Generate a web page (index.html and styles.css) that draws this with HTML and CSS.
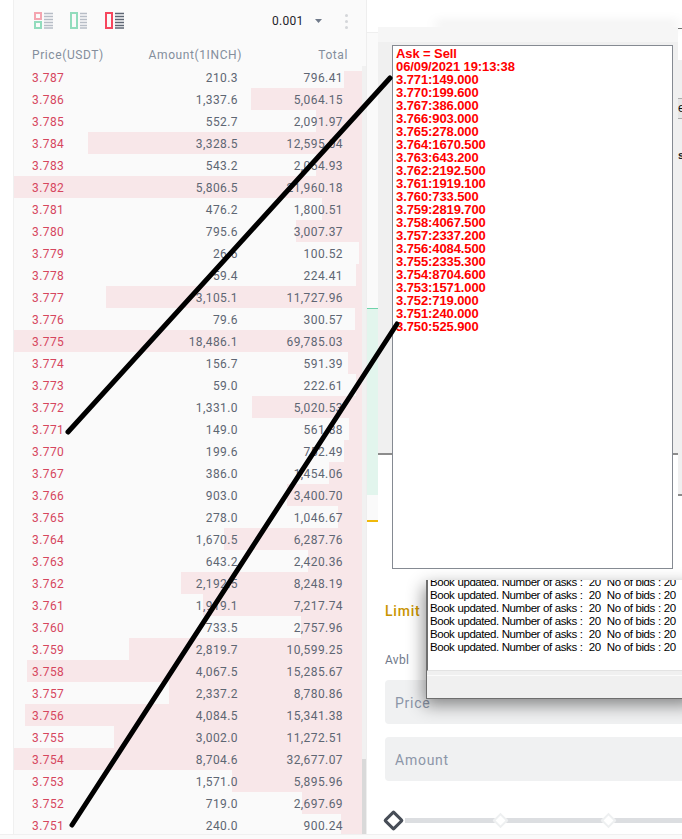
FILE: index.html
```html
<!DOCTYPE html>
<html lang="en">
<head>
<meta charset="utf-8">
<title>Order book</title>
<link rel="stylesheet" href="styles.css">
</head>
<body>
<div class="page">
  <section class="book">
    <div class="toolbar">
      <div class="modes">
        <svg class="mode" width="19" height="17" viewBox="0 0 19 17"><rect x="1" y="1" width="6" height="6" class="red-soft"/><rect x="1" y="10" width="6" height="6" class="green-soft"/><path class="lines-soft" d="M10 1.5h9M10 4.5h9M10 7.5h9M10 10.5h9M10 13.5h9M10 16h9"/></svg>
        <svg class="mode" width="19" height="17" viewBox="0 0 19 17"><rect x="1" y="1" width="6" height="15" class="green-soft"/><path class="lines-soft" d="M10 1.5h7M10 4.5h7M10 7.5h7M10 10.5h7M10 13.5h7M10 16h7"/></svg>
        <svg class="mode" width="19" height="17" viewBox="0 0 19 17"><rect x="1" y="1" width="6" height="15" class="red-strong"/><path class="lines-strong" d="M10 1.5h9M10 4.5h9M10 7.5h9M10 10.5h9M10 13.5h9M10 16h9"/></svg>
      </div>
      <span class="tick">0.001</span>
      <svg class="caret" width="7" height="4" viewBox="0 0 7 4"><path d="M0 0h7L3.5 4z"/></svg>
      <span class="dots"><i></i><i></i><i></i></span>
    </div>
    <div class="head"><span>Price(USDT)</span><span class="r">Amount(1INCH)</span><span class="r">Total</span></div>
    <div class="scroller">
      <div class="rows">
        <div class="row first"><i class="bar" style="width:17.5px"></i><span class="p">3.787</span><span class="r">210.3</span><span class="r">796.41</span></div>
        <div class="row"><i class="bar" style="width:110.5px"></i><span class="p">3.786</span><span class="r">1,337.6</span><span class="r">5,064.15</span></div>
        <div class="row"><i class="bar" style="width:45.5px"></i><span class="p">3.785</span><span class="r">552.7</span><span class="r">2,091.97</span></div>
        <div class="row"><i class="bar" style="width:274px"></i><span class="p">3.784</span><span class="r">3,328.5</span><span class="r">12,595.04</span></div>
        <div class="row"><i class="bar" style="width:45.5px"></i><span class="p">3.783</span><span class="r">543.2</span><span class="r">2,054.93</span></div>
        <div class="row"><i class="bar" style="width:347.5px"></i><span class="p">3.782</span><span class="r">5,806.5</span><span class="r">21,960.18</span></div>
        <div class="row"><i class="bar" style="width:39.5px"></i><span class="p">3.781</span><span class="r">476.2</span><span class="r">1,800.51</span></div>
        <div class="row"><i class="bar" style="width:65.5px"></i><span class="p">3.780</span><span class="r">795.6</span><span class="r">3,007.37</span></div>
        <div class="row"><i class="bar" style="width:2.5px"></i><span class="p">3.779</span><span class="r">26.6</span><span class="r">100.52</span></div>
        <div class="row"><i class="bar" style="width:5.5px"></i><span class="p">3.778</span><span class="r">59.4</span><span class="r">224.41</span></div>
        <div class="row"><i class="bar" style="width:255.5px"></i><span class="p">3.777</span><span class="r">3,105.1</span><span class="r">11,727.96</span></div>
        <div class="row"><i class="bar" style="width:7px"></i><span class="p">3.776</span><span class="r">79.6</span><span class="r">300.57</span></div>
        <div class="row"><i class="bar" style="width:347.5px"></i><span class="p">3.775</span><span class="r">18,486.1</span><span class="r">69,785.03</span></div>
        <div class="row"><i class="bar" style="width:13.5px"></i><span class="p">3.774</span><span class="r">156.7</span><span class="r">591.39</span></div>
        <div class="row"><i class="bar" style="width:5.5px"></i><span class="p">3.773</span><span class="r">59.0</span><span class="r">222.61</span></div>
        <div class="row"><i class="bar" style="width:109.5px"></i><span class="p">3.772</span><span class="r">1,331.0</span><span class="r">5,020.53</span></div>
        <div class="row"><i class="bar" style="width:12.5px"></i><span class="p">3.771</span><span class="r">149.0</span><span class="r">561.88</span></div>
        <div class="row"><i class="bar" style="width:17.5px"></i><span class="p">3.770</span><span class="r">199.6</span><span class="r">752.49</span></div>
        <div class="row"><i class="bar" style="width:32.5px"></i><span class="p">3.767</span><span class="r">386.0</span><span class="r">1,454.06</span></div>
        <div class="row"><i class="bar" style="width:74.5px"></i><span class="p">3.766</span><span class="r">903.0</span><span class="r">3,400.70</span></div>
        <div class="row"><i class="bar" style="width:23.5px"></i><span class="p">3.765</span><span class="r">278.0</span><span class="r">1,046.67</span></div>
        <div class="row"><i class="bar" style="width:137.5px"></i><span class="p">3.764</span><span class="r">1,670.5</span><span class="r">6,287.76</span></div>
        <div class="row"><i class="bar" style="width:53.5px"></i><span class="p">3.763</span><span class="r">643.2</span><span class="r">2,420.36</span></div>
        <div class="row"><i class="bar" style="width:180.5px"></i><span class="p">3.762</span><span class="r">2,192.5</span><span class="r">8,248.19</span></div>
        <div class="row"><i class="bar" style="width:158.5px"></i><span class="p">3.761</span><span class="r">1,919.1</span><span class="r">7,217.74</span></div>
        <div class="row"><i class="bar" style="width:60.5px"></i><span class="p">3.760</span><span class="r">733.5</span><span class="r">2,757.96</span></div>
        <div class="row"><i class="bar" style="width:232.5px"></i><span class="p">3.759</span><span class="r">2,819.7</span><span class="r">10,599.25</span></div>
        <div class="row"><i class="bar" style="width:334.5px"></i><span class="p">3.758</span><span class="r">4,067.5</span><span class="r">15,285.67</span></div>
        <div class="row"><i class="bar" style="width:192.5px"></i><span class="p">3.757</span><span class="r">2,337.2</span><span class="r">8,780.86</span></div>
        <div class="row"><i class="bar" style="width:336.5px"></i><span class="p">3.756</span><span class="r">4,084.5</span><span class="r">15,341.38</span></div>
        <div class="row"><i class="bar" style="width:247.5px"></i><span class="p">3.755</span><span class="r">3,002.0</span><span class="r">11,272.51</span></div>
        <div class="row"><i class="bar" style="width:347.5px"></i><span class="p">3.754</span><span class="r">8,704.6</span><span class="r">32,677.07</span></div>
        <div class="row"><i class="bar" style="width:129.5px"></i><span class="p">3.753</span><span class="r">1,571.0</span><span class="r">5,895.96</span></div>
        <div class="row"><i class="bar" style="width:59.5px"></i><span class="p">3.752</span><span class="r">719.0</span><span class="r">2,697.69</span></div>
        <div class="row"><i class="bar" style="width:20.5px"></i><span class="p">3.751</span><span class="r">240.0</span><span class="r">900.24</span></div>
      </div>
      <div class="scrollbar"><i class="thumb"></i></div>
    </div>
  </section>

  <section class="side">
    <div class="chart">
      <i class="strip-top"></i>
      <i class="strip-green"></i>
      <i class="strip-gap"></i>
      <i class="strip-line"></i>
    </div>
    <div class="trade">
      <div class="limit">Limit</div>
      <div class="avbl">Avbl</div>
      <div class="field">Price</div>
      <div class="field">Amount</div>
      <div class="slider">
        <i class="knob"></i>
        <i class="stop stop-a"></i>
        <i class="stop stop-b"></i>
      </div>
    </div>
  </section>

  <div class="back-win">
    <div class="back-white"></div>
    <div class="back-btn">e</div>
    <div class="back-label">st</div>
  </div>

  <div class="log-win">
    <div class="log-list">
      <div class="log-line">Book updated. Number of asks :&nbsp; 20&nbsp; No of bids : 20</div>
      <div class="log-line">Book updated. Number of asks :&nbsp; 20&nbsp; No of bids : 20</div>
      <div class="log-line">Book updated. Number of asks :&nbsp; 20&nbsp; No of bids : 20</div>
      <div class="log-line">Book updated. Number of asks :&nbsp; 20&nbsp; No of bids : 20</div>
      <div class="log-line">Book updated. Number of asks :&nbsp; 20&nbsp; No of bids : 20</div>
      <div class="log-line">Book updated. Number of asks :&nbsp; 20&nbsp; No of bids : 20</div>
    </div>
    <div class="log-foot"></div>
  </div>

  <div class="main-shadow"></div>
  <div class="main-win">
    <div class="main-title"></div>
  </div>

  <div class="ask-box">
    <div>Ask = Sell</div>
    <div>06/09/2021 19:13:38</div>
    <div>3.771:149.000</div>
    <div>3.770:199.600</div>
    <div>3.767:386.000</div>
    <div>3.766:903.000</div>
    <div>3.765:278.000</div>
    <div>3.764:1670.500</div>
    <div>3.763:643.200</div>
    <div>3.762:2192.500</div>
    <div>3.761:1919.100</div>
    <div>3.760:733.500</div>
    <div>3.759:2819.700</div>
    <div>3.758:4067.500</div>
    <div>3.757:2337.200</div>
    <div>3.756:4084.500</div>
    <div>3.755:2335.300</div>
    <div>3.754:8704.600</div>
    <div>3.753:1571.000</div>
    <div>3.752:719.000</div>
    <div>3.751:240.000</div>
    <div>3.750:525.900</div>
  </div>

  <svg class="marks" width="682" height="839" viewBox="0 0 682 839">
    <path d="M390 78L68 432"/>
    <path d="M397 324L72 825"/>
  </svg>
</div>
</body>
</html>
```
FILE: styles.css
```css
* { box-sizing: border-box; }
html, body { margin: 0; padding: 0; background: #fff; }
body { width: 682px; height: 839px; overflow: hidden; font-family: Roboto, "Liberation Sans", sans-serif; }
i { display: block; }

.page { position: relative; width: 682px; height: 839px; overflow: hidden; display: flex; padding-left: 13px; }
.page::after { content: ""; position: absolute; left: 0; right: 0; top: 834px; height: 5px; background: #fafafa; border-top: 1px solid #f0f0f0; }

/* order book */
.book { width: 354px; height: 834px; flex: none; background: #fafafa; border-left: 1px solid #f0f0f0; border-right: 1px solid #eeeeee; overflow: hidden; }
.toolbar { height: 42px; display: flex; align-items: center; padding-left: 20px; }
.modes { display: flex; gap: 16.5px; margin-top: -1px; }
.mode { display: block; fill: none; }
.red-soft { stroke: #f4a5b0; stroke-width: 2; }
.green-soft { stroke: #92dcbd; stroke-width: 2; }
.red-strong { stroke: #f6465d; stroke-width: 2; }
.lines-soft { stroke: #b7bdc6; stroke-width: 1.6; }
.lines-strong { stroke: #5e6673; stroke-width: 1.6; }
.tick { margin-left: 148px; font-size: 12px; letter-spacing: .3px; color: #1e2329; }
.caret { margin-left: 11px; fill: #707a8a; }
.dots { margin-left: 23px; display: flex; flex-direction: column; gap: 3px; }
.dots i { width: 3px; height: 3px; border-radius: 50%; background: #d4d6d9; }

.head { height: 24px; padding-top: 1px; display: grid; grid-template-columns: 100px 110px 106px; padding-left: 18px; align-items: center; font-size: 12px; letter-spacing: .6px; color: #848e9c; }
.r { text-align: right; }

.scroller { position: relative; height: 768px; overflow: hidden; }
.row { position: relative; height: 22px; padding-top: 1px; width: 347.5px; display: grid; grid-template-columns: 100px 106px 105px; padding-left: 18px; align-items: center; font-size: 12px; letter-spacing: .42px; color: #5e6673; }
.row > span { position: relative; }
.bar { position: absolute; top: 0; right: 0; bottom: 0; background: #f8e7e9; }
.first .bar { top: 5px; }
.p { color: #d6465e; }
.scrollbar { position: absolute; top: 0; right: 0; bottom: 0; width: 4.5px; background: #f1f1f1; }
.thumb { position: absolute; left: 0; right: 0; bottom: 0; height: 75px; background: #d9d9d9; }

/* right side */
.side { flex: 1; min-width: 0; overflow: hidden; }
.chart { height: 522px; width: 11px; display: flex; flex-direction: column; }
.strip-top { flex: none; height: 33px; border-bottom: 1px solid #efefef; }
.chart::before { content: ""; order: 1; height: 275px; background: #fafafa; flex: none; }
.strip-green { flex: none; order: 2; height: 187px; background: #e2f5ed; border-top: 1px solid #6fd3ab; }
.strip-gap { flex: none; order: 3; height: 25px; background: #fafafa; }
.strip-line { flex: none; order: 4; height: 2px; background: #f0b90b; }

.trade { width: 400px; padding-left: 18px; position: relative; height: 312px; }
.limit { margin-top: 80px; height: 18px; line-height: 18px; font-size: 14px; font-weight: 500; letter-spacing: .8px; color: #c99400; }
.avbl { margin-top: 32px; height: 16px; line-height: 16px; font-size: 12px; letter-spacing: .3px; color: #707a8a; }
.field { height: 44px; margin-bottom: 13px; padding-left: 10px; line-height: 46px; font-size: 14px; letter-spacing: .75px; color: #8c96a8; background: #f0f1f2; border-radius: 4px; }
.avbl + .field { margin-top: 12px; }
.slider { position: relative; margin-top: 37px; margin-left: 20px; height: 5px; background: #dcdee1; }
.knob { position: absolute; left: -19px; top: -5px; width: 15px; height: 15px; background: #fff; border: 3px solid #474d57; border-radius: 2px; transform: rotate(45deg); }
.stop { position: absolute; top: -3px; width: 11px; height: 11px; background: #fff; border: 2px solid #eef0f1; transform: rotate(45deg); }
.stop-a { left: 90px; }
.stop-b { left: 198px; }

/* desktop windows lying over the page */
.back-win { position: absolute; left: 678px; top: 28px; width: 20px; height: 468px; background: #f0f0f0; border-top: 1px solid #767676; border-bottom: 2px solid #8c8c8c; }
.back-white { height: 31px; background: #fff; }
.back-btn { position: absolute; left: 0; top: 69px; width: 20px; height: 21px; font: 12px/19px "Liberation Sans", sans-serif; color: #111; background: #e6e6e6; border-top: 1px solid #adadad; border-bottom: 1px solid #adadad; }
.back-label { position: absolute; left: 0; top: 120px; font: bold 11px/13px "Liberation Sans", sans-serif; color: #222; }

.log-win { position: absolute; left: 426px; top: 580px; width: 270px; height: 119px; background: #f0f0f0; border-bottom: 1px solid #6e6e6e; border-left: 1px solid #6e6e6e; box-shadow: -2px 6px 16px rgba(0,0,0,.45); }
.log-list { height: 91px; background: #fff; border-left: 1px solid #6e6e6e; border-bottom: 1px solid #e3e3e3; padding-left: 2px; overflow: hidden; }
.log-line { height: 13px; font: 11.5px/13px "Liberation Sans", sans-serif; letter-spacing: -.45px; word-spacing: .35px; white-space: nowrap; color: #000; }
.log-line:first-child { margin-top: -4px; }
.log-foot { height: 27px; border-top: 1px solid #fbfbfb; margin-top: 4px; }

.main-shadow { position: absolute; left: 435px; top: 27px; width: 244px; height: 2px; box-shadow: 0 -3px 12px rgba(0,0,0,.28); }
.main-win { position: absolute; left: 378px; top: 27px; width: 300px; height: 428px; background: #f0f0f0; border-bottom: 2px solid #8c8c8c; }
.main-title { height: 15px; background: #f6f6f6; }

.ask-box { position: absolute; left: 392px; top: 45px; width: 281px; height: 524px; padding: 1px 0 0 3px; background: #fff; border: 1px solid #858a92; font: bold 13px/13px "Liberation Sans", sans-serif; letter-spacing: -.1px; color: #ff0000; }

.marks { position: absolute; left: 0; top: 0; fill: none; stroke: #000; stroke-width: 5; stroke-linecap: round; pointer-events: none; }
```
